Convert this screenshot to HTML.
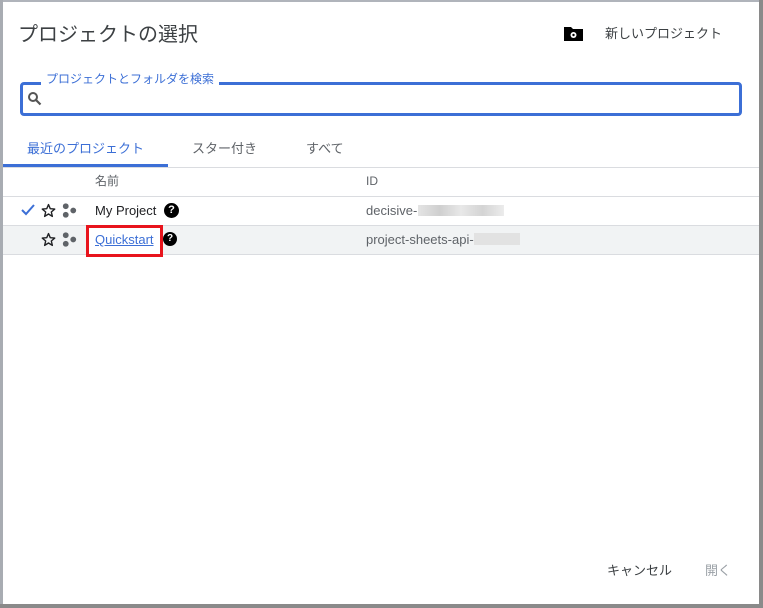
<!DOCTYPE html>
<html><head><meta charset="utf-8"><style>
*{margin:0;padding:0;box-sizing:border-box}
body{width:763px;height:608px;background:#fff;position:relative;overflow:hidden;font-family:"Liberation Sans","Noto Sans CJK JP",sans-serif;color:#202124}
.a{position:absolute;white-space:nowrap;line-height:1.2}
</style></head><body>
<div class="a" style="left:0;top:0;width:763px;height:2px;background:#b0b4bb"></div>
<div class="a" style="left:0;top:0;width:3px;height:608px;background:#a8acb2"></div>
<div class="a" style="left:759px;top:0;width:4px;height:608px;background:#8a8a8a"></div>
<div class="a" style="left:0;top:604px;width:763px;height:4px;background:#8a8a8a"></div>

<div class="a" style="left:18px;top:23px;font-size:20px;color:#3c4043">プロジェクトの選択</div>
<svg class="a" style="left:563px;top:25px" width="21" height="17" viewBox="0 0 21 17"><path d="M1 2h7l2 2h10v12H1z" fill="#000"/><circle cx="10.5" cy="10" r="3" fill="#fff"/><circle cx="10.5" cy="10" r="1.2" fill="#000"/></svg>
<div class="a" style="left:605px;top:26px;font-size:13px;color:#3c4043">新しいプロジェクト</div>

<div class="a" style="left:20px;top:82px;width:722px;height:34px;border:3px solid #3c6fd6;border-radius:4px"></div>
<div class="a" style="left:41px;top:72px;background:#fff;padding:0 5px;font-size:12px;color:#3c6fd6">プロジェクトとフォルダを検索</div>
<svg class="a" style="left:27px;top:91px" width="15" height="15" viewBox="0 0 15 15"><circle cx="6" cy="6" r="4" stroke="#555" stroke-width="2" fill="none"/><path d="M9 9l4.5 4.5" stroke="#555" stroke-width="2.2"/></svg>

<div class="a" style="left:27px;top:141px;font-size:13px;color:#3c6fd6">最近のプロジェクト</div>
<div class="a" style="left:192px;top:141px;font-size:13px;color:#5f6368">スター付き</div>
<div class="a" style="left:306px;top:141px;font-size:13px;color:#5f6368">すべて</div>
<div class="a" style="left:3px;top:164px;width:165px;height:3px;background:#3c6fd6"></div>
<div class="a" style="left:3px;top:167px;width:756px;height:1px;background:#dadce0"></div>

<div class="a" style="left:95px;top:174px;font-size:12px;color:#5f6368">名前</div>
<div class="a" style="left:366px;top:174px;font-size:12px;color:#5f6368">ID</div>
<div class="a" style="left:3px;top:196px;width:756px;height:1px;background:#dadce0"></div>

<svg class="a" style="left:21px;top:204px" width="14" height="12" viewBox="0 0 14 12"><path d="M1 6l4 4 8-9" stroke="#3c6fd6" stroke-width="2" fill="none"/></svg>
<svg class="a" style="left:41px;top:203px" width="15" height="15" viewBox="0 0 24 24"><path d="M12 2.5l2.8 6.6 7.2.6-5.5 4.7 1.7 7-6.2-3.8-6.2 3.8 1.7-7L2 9.7l7.2-.6z" fill="none" stroke="#202124" stroke-width="2.2" stroke-linejoin="round"/></svg>
<svg class="a" style="left:62px;top:203px" width="15" height="15" viewBox="0 0 14 14"><circle cx="3.5" cy="3" r="2.7" fill="#5f6368"/><circle cx="10.5" cy="7" r="2.7" fill="#5f6368"/><circle cx="3.5" cy="11" r="2.7" fill="#5f6368"/></svg>
<div class="a" style="left:95px;top:203px;font-size:13px">My Project</div>
<div class="a" style="left:164px;top:203px;width:15px;height:15px;border-radius:50%;background:#000;color:#fff;font-size:11px;font-weight:bold;text-align:center;line-height:15px">?</div>
<div class="a" style="left:366px;top:203px;font-size:13px;color:#5f6368">decisive-</div>
<div class="a" style="left:418px;top:205px;width:86px;height:11px;background:linear-gradient(90deg,#e4e4e4,#cfcfcf,#e8e8e8,#d4d4d4,#ececec)"></div>
<div class="a" style="left:3px;top:225px;width:756px;height:1px;background:#dadce0"></div>

<div class="a" style="left:3px;top:226px;width:756px;height:28px;background:#f1f3f4"></div>
<svg class="a" style="left:41px;top:232px" width="15" height="15" viewBox="0 0 24 24"><path d="M12 2.5l2.8 6.6 7.2.6-5.5 4.7 1.7 7-6.2-3.8-6.2 3.8 1.7-7L2 9.7l7.2-.6z" fill="none" stroke="#202124" stroke-width="2.2" stroke-linejoin="round"/></svg>
<svg class="a" style="left:62px;top:232px" width="15" height="15" viewBox="0 0 14 14"><circle cx="3.5" cy="3" r="2.7" fill="#5f6368"/><circle cx="10.5" cy="7" r="2.7" fill="#5f6368"/><circle cx="3.5" cy="11" r="2.7" fill="#5f6368"/></svg>
<div class="a" style="left:3px;top:254px;width:756px;height:1px;background:#dadce0"></div>
<div class="a" style="left:86px;top:225px;width:77px;height:32px;border:3px solid #e8141c;background:#fff"></div>
<div class="a" style="left:95px;top:232px;font-size:13px;color:#3c6fd6;text-decoration:underline">Quickstart</div>
<div class="a" style="left:163px;top:232px;width:14px;height:14px;border-radius:50%;background:#000;color:#fff;font-size:10px;font-weight:bold;text-align:center;line-height:14px">?</div>
<div class="a" style="left:366px;top:232px;font-size:13px;color:#5f6368">project-sheets-api-</div>
<div class="a" style="left:474px;top:233px;width:46px;height:12px;background:#e2e2e2"></div>

<div class="a" style="left:607px;top:563px;font-size:13px;color:#3c4043">キャンセル</div>
<div class="a" style="left:705px;top:563px;font-size:13px;color:#9aa0a6">開く</div>
</body></html>
